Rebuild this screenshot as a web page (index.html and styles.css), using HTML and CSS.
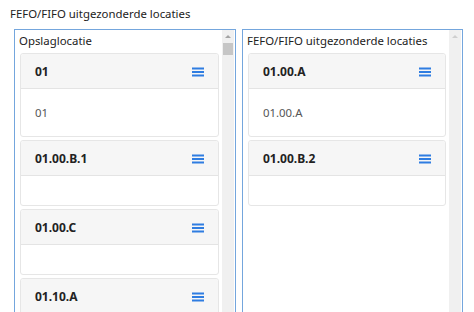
FILE: index.html
```html
<!DOCTYPE html>
<html lang="nl">
<head>
  <meta charset="UTF-8" />
  <meta name="viewport" content="width=device-width, initial-scale=1.0"/>
  <title>FEFO/FIFO uitgezonderde locaties</title>
  <link rel="stylesheet" href="styles.css">
</head>
<body>
  <div class="page">
    <div class="title">FEFO/FIFO uitgezonderde locaties</div>
    <div class="lists">
      <div class="panel">
        <div class="panel-body">
          <div class="panel-heading">Opslaglocatie</div>
          <div class="card">
            <div class="card-header"><span>01</span><svg class="menu" width="12" height="10" viewBox="0 0 12 10"><rect y="0.5" width="12" height="2"/><rect y="4" width="12" height="2"/><rect y="7.5" width="12" height="2"/></svg></div>
            <div class="card-body">01</div>
          </div>
          <div class="card">
            <div class="card-header"><span>01.00.B.1</span><svg class="menu" width="12" height="10" viewBox="0 0 12 10"><rect y="0.5" width="12" height="2"/><rect y="4" width="12" height="2"/><rect y="7.5" width="12" height="2"/></svg></div>
            <div class="card-body"></div>
          </div>
          <div class="card">
            <div class="card-header"><span>01.00.C</span><svg class="menu" width="12" height="10" viewBox="0 0 12 10"><rect y="0.5" width="12" height="2"/><rect y="4" width="12" height="2"/><rect y="7.5" width="12" height="2"/></svg></div>
            <div class="card-body"></div>
          </div>
          <div class="card">
            <div class="card-header"><span>01.10.A</span><svg class="menu" width="12" height="10" viewBox="0 0 12 10"><rect y="0.5" width="12" height="2"/><rect y="4" width="12" height="2"/><rect y="7.5" width="12" height="2"/></svg></div>
            <div class="card-body"></div>
          </div>
        </div>
        <div class="scrollbar">
          <span class="arrow"></span>
          <span class="thumb"></span>
        </div>
      </div>

      <div class="panel">
        <div class="panel-body">
          <div class="panel-heading">FEFO/FIFO uitgezonderde locaties</div>
          <div class="card">
            <div class="card-header"><span>01.00.A</span><svg class="menu" width="12" height="10" viewBox="0 0 12 10"><rect y="0.5" width="12" height="2"/><rect y="4" width="12" height="2"/><rect y="7.5" width="12" height="2"/></svg></div>
            <div class="card-body">01.00.A</div>
          </div>
          <div class="card">
            <div class="card-header"><span>01.00.B.2</span><svg class="menu" width="12" height="10" viewBox="0 0 12 10"><rect y="0.5" width="12" height="2"/><rect y="4" width="12" height="2"/><rect y="7.5" width="12" height="2"/></svg></div>
            <div class="card-body"></div>
          </div>
        </div>
        <div class="scrollbar">
          <span class="arrow disabled"></span>
        </div>
      </div>
    </div>
  </div>
</body>
</html>
```

FILE: styles.css
```css
body {
  margin: 0;
  font-family: 'Noto Sans', sans-serif;
  font-size: 11.4px;
  color: #222;
  background: #fff;
  overflow: hidden;
}

.page {
  padding: 4px 0 0 10px;
}

.title {
  line-height: 20px;
  margin-bottom: 5px;
}

.lists {
  display: grid;
  grid-template-columns: 222px 221px;
  gap: 6px;
  margin-left: 4px;
  height: 283px;
}

.panel {
  display: flex;
  border: 1px solid #74a6dd;
  border-bottom: none;
  background: #fff;
}

.panel-body {
  flex: 1;
  overflow: hidden;
  padding: 1px 3px 0 4px;
}

.panel-heading {
  line-height: 20px;
  margin-bottom: 2px;
}

.card {
  border: 1px solid #e6e6e6;
  border-radius: 3px;
  margin: 0 0 3px 1px;
  background: #fff;
}

.card-header {
  display: flex;
  justify-content: space-between;
  align-items: center;
  padding: 9px 14px 8px;
  line-height: 17px;
  font-size: 12px;
  font-weight: bold;
  background: #f6f6f6;
  border-bottom: 1px solid #e4e4e4;
  border-radius: 3px 3px 0 0;
}

.menu {
  fill: #2f7de1;
}

.card-body {
  padding: 15px 14px 14px;
  line-height: 18px;
  color: #555;
}

.card-body:empty {
  padding: 14px;
  min-height: 1px;
}

.scrollbar {
  width: 12px;
  margin-right: 1px;
  background: #f0f0f0;
  display: flex;
  flex-direction: column;
  align-items: center;
}

.arrow {
  margin-top: 5px;
  width: 0;
  height: 0;
  border-left: 3px solid transparent;
  border-right: 3px solid transparent;
  border-bottom: 3px solid #a3a3a3;
}

.arrow.disabled {
  border-bottom-color: #cfcfcf;
}

.thumb {
  margin-top: 5px;
  width: 10px;
  height: 12px;
  background: #c6c6c6;
}
```
